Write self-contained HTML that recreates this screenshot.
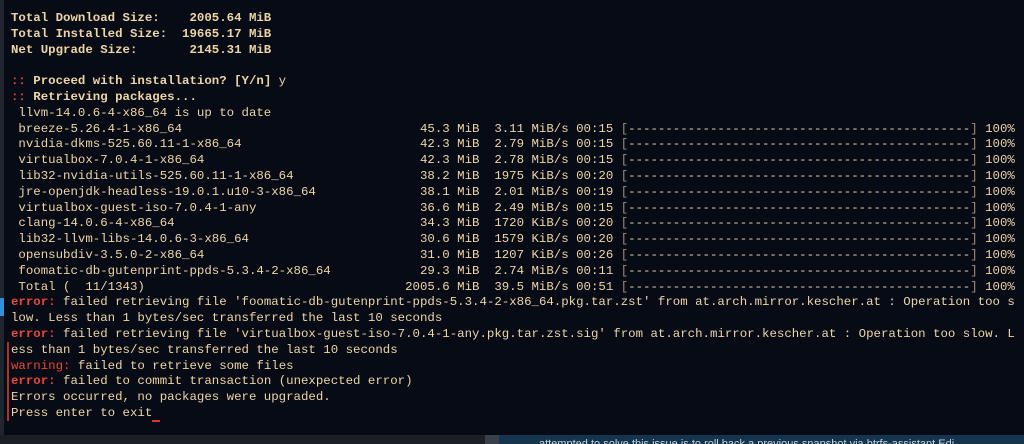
<!DOCTYPE html>
<html><head><meta charset="utf-8"><style>
html,body{margin:0;padding:0;width:1024px;height:444px;overflow:hidden;background:#070b16;}
#left{position:absolute;left:0;top:0;width:4px;height:444px;background:#1f2630;}
#left .b{position:absolute;left:0;top:298px;width:4px;height:18px;background:#2f8fd8;}
#bar{position:absolute;left:7px;top:342px;width:2px;height:79px;background:#b03030;}
pre{position:absolute;left:11px;top:11px;margin:0;font-family:"Liberation Mono",monospace;font-size:12.4px;line-height:15.8px;color:#efd4a6;white-space:pre;}
b{font-weight:bold;}
.r{color:#e8473d;font-weight:bold;}
.w{color:#e8473d;}
.d{color:#a08e70;}
#bot{position:absolute;left:0;top:435px;width:1024px;height:9px;background:#1c2026;}
#bot .g{position:absolute;left:485px;top:0;width:14px;height:9px;background:#3a404a;}
#bot .bl{position:absolute;left:499px;top:0;width:525px;height:9px;background:#14354d;overflow:hidden;}
#bot .bl span{position:absolute;left:40px;top:3px;font-family:"Liberation Sans",sans-serif;font-size:11px;color:#c8d4de;white-space:nowrap;}
#cur{position:absolute;left:152px;top:420px;width:8px;height:2px;background:#e03030;}
</style></head><body>
<div id="left"><div class="b"></div></div>
<div id="bar"></div>
<pre><b>Total Download Size:    2005.64 MiB
Total Installed Size:  19665.17 MiB
Net Upgrade Size:       2145.31 MiB</b>

<span class="r">::</span><b> Proceed with installation? [Y/n]</b> y
<span class="r">::</span><b> Retrieving packages...</b>
 llvm-14.0.6-4-x86_64 is up to date
 breeze-5.26.4-1-x86_64                                45.3 MiB  3.11 MiB/s 00:15 <span class="d">[</span>----------------------------------------------<span class="d">]</span> 100%
 nvidia-dkms-525.60.11-1-x86_64                        42.3 MiB  2.79 MiB/s 00:15 <span class="d">[</span>----------------------------------------------<span class="d">]</span> 100%
 virtualbox-7.0.4-1-x86_64                             42.3 MiB  2.78 MiB/s 00:15 <span class="d">[</span>----------------------------------------------<span class="d">]</span> 100%
 lib32-nvidia-utils-525.60.11-1-x86_64                 38.2 MiB  1975 KiB/s 00:20 <span class="d">[</span>----------------------------------------------<span class="d">]</span> 100%
 jre-openjdk-headless-19.0.1.u10-3-x86_64              38.1 MiB  2.01 MiB/s 00:19 <span class="d">[</span>----------------------------------------------<span class="d">]</span> 100%
 virtualbox-guest-iso-7.0.4-1-any                      36.6 MiB  2.49 MiB/s 00:15 <span class="d">[</span>----------------------------------------------<span class="d">]</span> 100%
 clang-14.0.6-4-x86_64                                 34.3 MiB  1720 KiB/s 00:20 <span class="d">[</span>----------------------------------------------<span class="d">]</span> 100%
 lib32-llvm-libs-14.0.6-3-x86_64                       30.6 MiB  1579 KiB/s 00:20 <span class="d">[</span>----------------------------------------------<span class="d">]</span> 100%
 opensubdiv-3.5.0-2-x86_64                             31.0 MiB  1207 KiB/s 00:26 <span class="d">[</span>----------------------------------------------<span class="d">]</span> 100%
 foomatic-db-gutenprint-ppds-5.3.4-2-x86_64            29.3 MiB  2.74 MiB/s 00:11 <span class="d">[</span>----------------------------------------------<span class="d">]</span> 100%
 Total (  11/1343)                                   2005.6 MiB  39.5 MiB/s 00:51 <span class="d">[</span>----------------------------------------------<span class="d">]</span> 100%
<span class="r">error:</span> failed retrieving file 'foomatic-db-gutenprint-ppds-5.3.4-2-x86_64.pkg.tar.zst' from at.arch.mirror.kescher.at : Operation too s
low. Less than 1 bytes/sec transferred the last 10 seconds
<span class="r">error:</span> failed retrieving file 'virtualbox-guest-iso-7.0.4-1-any.pkg.tar.zst.sig' from at.arch.mirror.kescher.at : Operation too slow. L
ess than 1 bytes/sec transferred the last 10 seconds
<span class="w">warning:</span> failed to retrieve some files
<span class="r">error:</span> failed to commit transaction (unexpected error)
Errors occurred, no packages were upgraded.
Press enter to exit</pre>
<div id="cur"></div>
<div id="bot"><div class="g"></div><div class="bl"><span>attempted to solve this issue is to roll back a previous snapshot via btrfs-assistant Edi</span></div></div>
</body></html>
